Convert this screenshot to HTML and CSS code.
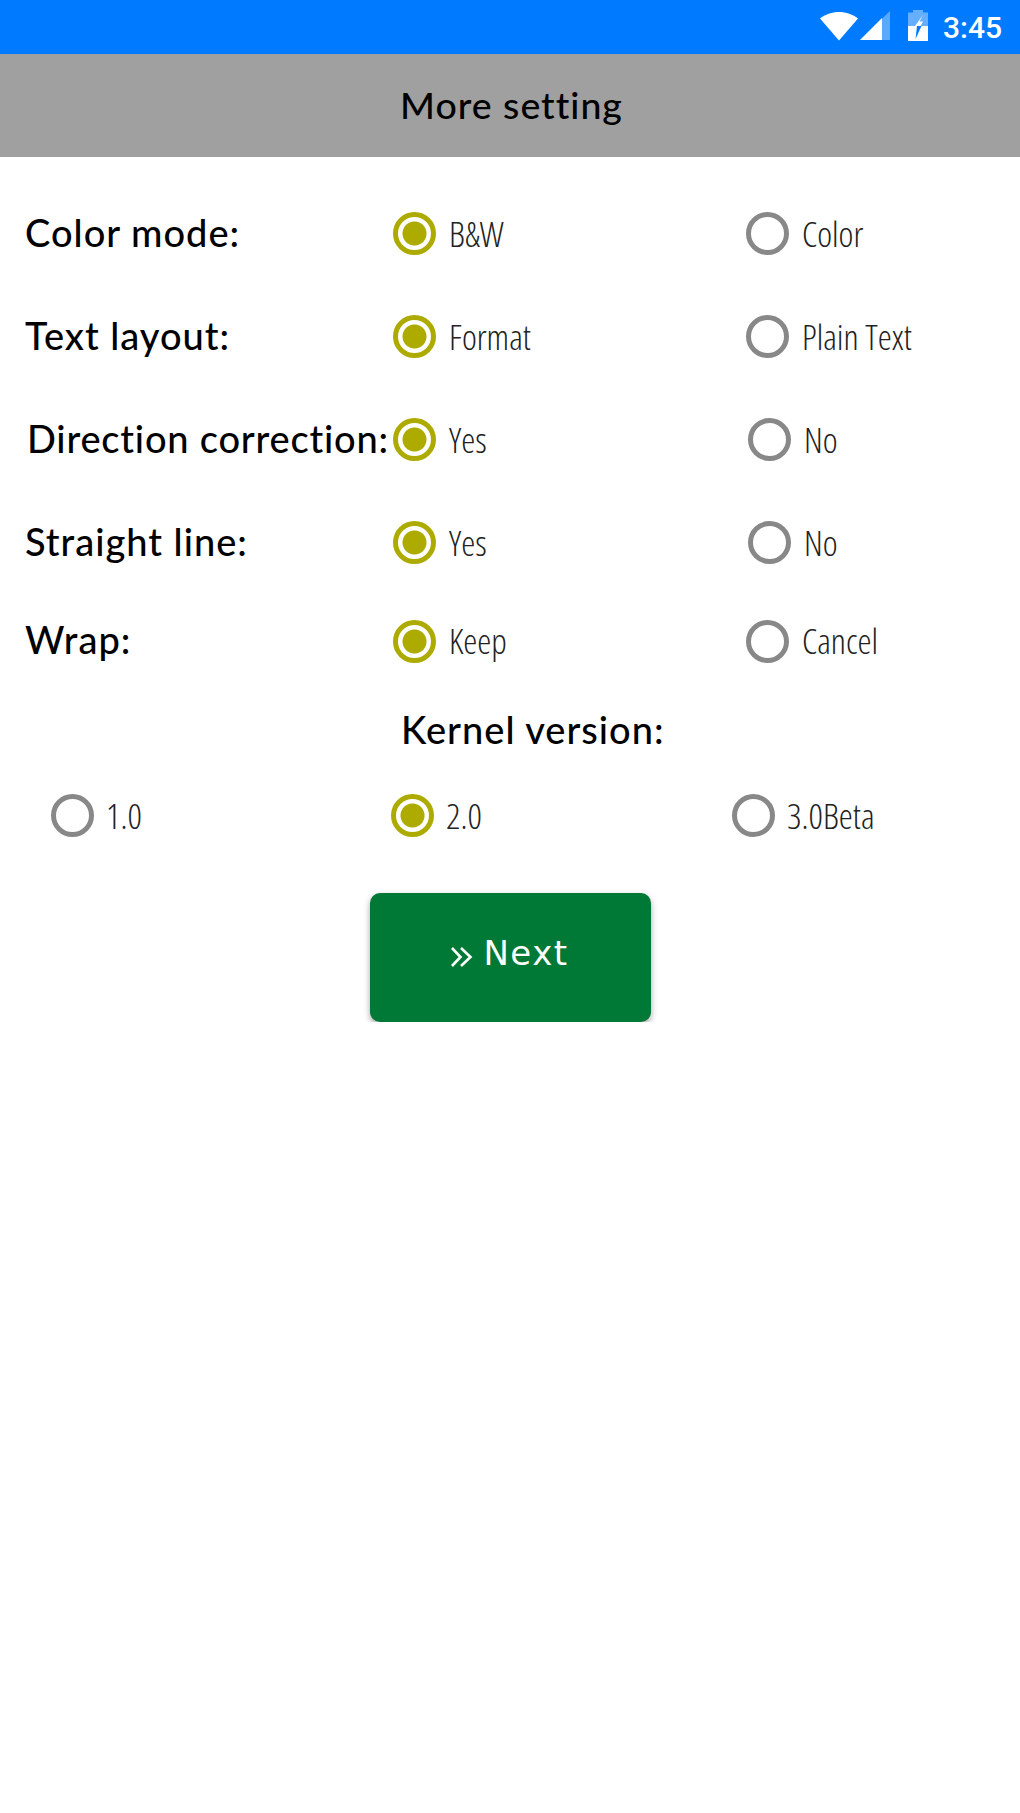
FILE: index.html
```html
<!DOCTYPE html>
<html lang="en">
<head>
    <meta charset="UTF-8">
    <meta name="viewport" content="width=device-width, initial-scale=1.0">
    <title>More setting</title>
    <link rel="stylesheet" href="styles.css">
</head>
<body>
    <div class="status-bar">
        <svg class="icon-wifi" viewBox="0 0 38 29" width="38" height="29">
            <path fill="#fff" d="M0 6.500C5 2.500 12 0 19 0C26 0 33 2.500 38 6.500L19 28.500Z"/>
        </svg>
        <svg class="icon-signal" viewBox="0 0 30 29" width="30" height="29">
            <path fill="#fff" fill-opacity="0.35" d="M30 0V29H0Z"/>
            <path fill="#fff" d="M22 7V29H0Z"/>
        </svg>
        <svg class="icon-battery" viewBox="0 0 20 31" width="20" height="31">
            <path fill="#fff" fill-opacity="0.4" d="M5 0H15V2.500H20V31H0V2.500H5Z"/>
            <path fill="#fff" d="M0 16H20V31H0Z"/>
            <path fill="#fff" d="M15 5L7 16H12.500L15 11.500H11.500Z"/>
            <path fill="#007bff" d="M9 16H13.500L7.500 29Z"/>
        </svg>
        <span class="clock">3:45</span>
    </div>
    <div class="title-bar">More setting</div>

    <div class="form">
        <div class="row">
            <div class="row-label">Color mode:</div>
            <div class="option"><span class="radio checked"></span>B&amp;W</div>
            <div class="option"><span class="radio"></span>Color</div>
        </div>
        <div class="row">
            <div class="row-label">Text layout:</div>
            <div class="option"><span class="radio checked"></span>Format</div>
            <div class="option"><span class="radio"></span>Plain Text</div>
        </div>
        <div class="row">
            <div class="row-label label-long">Direction correction:</div>
            <div class="option"><span class="radio checked"></span>Yes</div>
            <div class="option option-shift"><span class="radio"></span>No</div>
        </div>
        <div class="row">
            <div class="row-label">Straight line:</div>
            <div class="option"><span class="radio checked"></span>Yes</div>
            <div class="option option-shift"><span class="radio"></span>No</div>
        </div>
        <div class="row row-wrap">
            <div class="row-label">Wrap:</div>
            <div class="option"><span class="radio checked"></span>Keep</div>
            <div class="option"><span class="radio"></span>Cancel</div>
        </div>
        <div class="kernel-title">Kernel version:</div>
        <div class="kernel-row">
            <div class="option"><span class="radio"></span>1.0</div>
            <div class="option"><span class="radio checked"></span>2.0</div>
            <div class="option"><span class="radio"></span>3.0Beta</div>
        </div>
        <div class="actions">
            <button class="next-button">
                <svg viewBox="0 0 22 22" width="22" height="22">
                    <path fill="none" stroke="#fff" stroke-width="2.600" d="M1 2L9.500 11L1 20M10 2L19.500 11L10 20"/>
                </svg>
                <span>Next</span>
            </button>
        </div>
    </div>
</body>
</html>
```
FILE: styles.css
```css
body {
    margin: 0;
    background: #fff;
    font-family: "Lato", sans-serif;
    color: #000;
}
.status-bar {
    height: 54px;
    background-color: #007bff;
    display: flex;
    align-items: flex-start;
    padding-left: 820px;
    box-sizing: border-box;
}
.icon-wifi {
    margin-top: 12px;
}
.icon-signal {
    margin: 11px 0 0 2px;
}
.icon-battery {
    margin: 10px 0 0 18px;
}
.clock {
    margin: 10px 0 0 15px;
    font-family: "Roboto", sans-serif;
    font-weight: 500;
    font-size: 30px;
    line-height: 36px;
    color: #fff;
}
.title-bar {
    height: 103px;
    padding: 0 0 3px 3px;
    box-sizing: border-box;
    background-color: #a0a0a0;
    display: flex;
    align-items: center;
    justify-content: center;
    font-size: 37.500px;
    font-weight: 500;
    letter-spacing: 1px;
}
.form {
    padding-top: 24px;
}
.row {
    height: 103px;
    display: grid;
    grid-template-columns: 393px 353px 1fr;
    align-items: center;
}
.row-wrap {
    height: 94px;
}
.row-label {
    padding-left: 25px;
    padding-bottom: 2px;
    font-size: 38px;
    font-weight: 500;
    letter-spacing: 1px;
    white-space: nowrap;
}
.label-long {
    padding-left: 27px;
    letter-spacing: 0.800px;
}
.option {
    display: flex;
    align-items: center;
    font-family: "Open Sans", sans-serif;
    font-stretch: 75%;
    font-weight: 300;
    font-size: 35.500px;
    color: #222;
    white-space: nowrap;
}
.option-shift {
    padding-left: 2px;
}
.radio {
    width: 43px;
    height: 43px;
    box-sizing: border-box;
    border: 5px solid #888;
    border-radius: 50%;
    margin: 2px 13px 0 0;
    flex: none;
    background: #fff;
}
.radio.checked {
    border-color: #adab00;
    background: radial-gradient(circle, #adab00 0 11.500px, #fff 12.500px);
}
.kernel-title {
    height: 90px;
    padding-bottom: 7px;
    box-sizing: border-box;
    display: flex;
    align-items: center;
    padding-left: 401px;
    font-size: 38px;
    font-weight: 500;
    letter-spacing: 1px;
}
.kernel-row {
    height: 78px;
    padding: 0 0 3px 51px;
    box-sizing: border-box;
    display: grid;
    grid-template-columns: 340px 341px 1fr;
    align-items: center;
}
.kernel-row .radio {
    margin-right: 12px;
}
.actions {
    display: flex;
    justify-content: center;
    padding-top: 38px;
}
.next-button {
    width: 281px;
    height: 129px;
    border: none;
    border-radius: 10px;
    background-color: #007836;
    color: #fff;
    font-family: "DejaVu Sans", sans-serif;
    font-size: 34px;
    letter-spacing: 1.500px;
    box-shadow: 0 3px 6px rgba(0, 0, 0, 0.35);
    display: flex;
    align-items: center;
    justify-content: center;
    gap: 10px;
    padding: 0 0 10px 0;
}
.next-button svg {
    margin-top: 9px;
}
```
